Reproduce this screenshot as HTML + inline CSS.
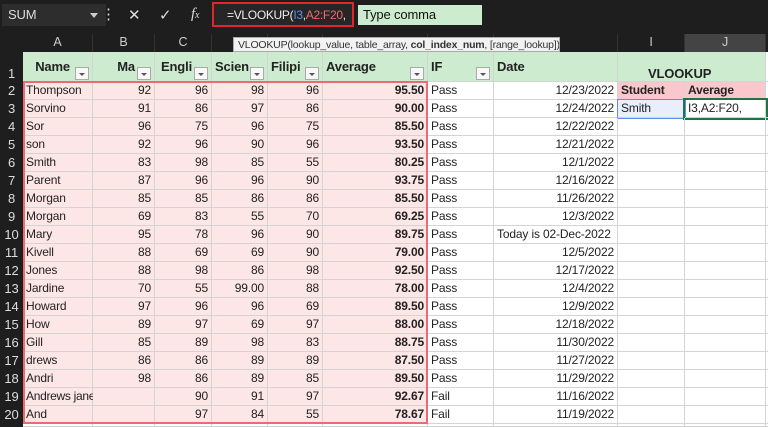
<!DOCTYPE html>
<html><head><meta charset="utf-8">
<style>
*{margin:0;padding:0;box-sizing:border-box}
body{width:768px;height:427px;background:#fff;font-family:"Liberation Sans",Arial,sans-serif;font-size:12px;letter-spacing:-0.15px;color:#222;position:relative;overflow:hidden}
.top{position:absolute;left:0;top:0;width:768px;height:34px;background:#1e1e1e}
.nb{position:absolute;left:2px;top:4px;width:104px;height:22px;background:#2d2d2d;color:#ddd;font-size:13px;padding:3px 6px}
.nb:after{content:"";position:absolute;right:8px;top:9px;border:4px solid transparent;border-top:5px solid #ccc}
.ic{position:absolute;top:6px;color:#ddd;font-size:15px}
.fx{position:absolute;left:212px;top:2px;width:142px;height:25px;border:2px solid #e0262a;background:#262626;color:#eee;font-size:12px;letter-spacing:-0.3px;padding:4px 0 0 13px;white-space:nowrap}
.tc{position:absolute;left:358px;top:5px;width:124px;height:20px;background:#cdeccf;color:#111;font-size:13px;padding:2px 5px}
.tip{position:absolute;left:233px;top:37px;width:327px;height:15px;background:#f2f2f2;border:1px solid #aaa;font-size:10.5px;letter-spacing:-0.2px;color:#333;padding:1px 4px;white-space:nowrap;overflow:hidden}
.row{position:absolute;left:0;width:768px;display:grid;grid-template-columns:23px 70px 62px 57px 56px 55px 105px 66px 124px 67px 81px 2px}
.row>div{border-right:1px solid #d4d4d4;border-bottom:1px solid #d4d4d4;padding:0 3px;white-space:nowrap;overflow:hidden;line-height:17px;position:relative}
.row>div:first-child{background:#1e1e1e;color:#ddd;text-align:center;border:none;padding:0;font-size:13px}
.ch>div{background:#1e1e1e;color:#ccc;text-align:center;border-right:1px solid #333;border-bottom:none;font-size:12.5px}
.p{background:#fde6e6}
.r{text-align:right}
.b{font-weight:bold}
.g{background:#cdeccf}
.h{line-height:30px!important;font-size:13px;padding-top:0!important}
.f{position:absolute;right:3px;bottom:1px;width:14px;height:13px;background:#f8f8f8;border:1px solid #aaa}
.f:after{content:"";position:absolute;left:3px;top:5px;border:3px solid transparent;border-top:3px solid #555}
</style></head><body>
<div class="top">
<div class="nb">SUM</div>
<div class="ic" style="left:101px;top:5px">⋮</div>
<div class="ic" style="left:128px">✕</div>
<div class="ic" style="left:159px">✓</div>
<div class="ic" style="left:191px;font-style:italic;font-family:'Liberation Serif',serif">f<span style="font-size:10px">x</span></div>
<div class="fx">=VLOOKUP(<span style="color:#5b8ff0">I3</span>,<span style="color:#f06a6a">A2:F20</span>,</div>
<div class="tc">Type comma</div>
</div>
<div class="row ch" style="top:34px;height:18px;line-height:18px"><div></div><div>A</div><div>B</div><div>C</div><div>D</div><div>E</div><div>F</div><div>G</div><div>H</div><div>I</div><div style="background:#444">J</div><div></div></div>
<div class="tip">VLOOKUP(lookup_value, table_array, <b>col_index_num</b>, [range_lookup])</div>
<div class="row" style="top:52px;height:30px"><div style="line-height:44px">1</div>
<div class="g b h" style="text-align:right;padding-right:22px">Name<span class="f"></span></div><div class="g b h r" style="padding-right:19px">Ma<span class="f"></span></div><div class="g b h" style="padding-left:6px">Engli<span class="f"></span></div><div class="g b h">Scien<span class="f"></span></div><div class="g b h">Filipi<span class="f"></span></div><div class="g b h">Average<span class="f"></span></div><div class="g b h">IF<span class="f"></span></div><div class="g b h">Date</div><div class="g" style="border-right:none"></div><div class="g b" style="line-height:44px;margin-left:-40px;font-size:13px">VLOOKUP</div><div></div></div>
<div class="row" style="top:82px;height:18px"><div>2</div><div class="p">Thompson</div><div class="p r">92</div><div class="p r">96</div><div class="p r">98</div><div class="p r">96</div><div class="p r b">95.50</div><div>Pass</div><div class="r">12/23/2022</div><div class="b" style="background:#f9c7cc">Student</div><div class="b" style="background:#f9c7cc">Average</div><div></div></div>
<div class="row" style="top:100px;height:18px"><div>3</div><div class="p">Sorvino</div><div class="p r">91</div><div class="p r">86</div><div class="p r">97</div><div class="p r">86</div><div class="p r b">90.00</div><div>Pass</div><div class="r">12/24/2022</div><div style="background:#e8eefa;outline:1px solid #5b8ff0">Smith</div><div style="outline:2px solid #217346">I3,A2:F20,</div><div></div></div>
<div class="row" style="top:118px;height:18px"><div>4</div><div class="p">Sor</div><div class="p r">96</div><div class="p r">75</div><div class="p r">96</div><div class="p r">75</div><div class="p r b">85.50</div><div>Pass</div><div class="r">12/22/2022</div><div></div><div></div><div></div></div>
<div class="row" style="top:136px;height:18px"><div>5</div><div class="p">son</div><div class="p r">92</div><div class="p r">96</div><div class="p r">90</div><div class="p r">96</div><div class="p r b">93.50</div><div>Pass</div><div class="r">12/21/2022</div><div></div><div></div><div></div></div>
<div class="row" style="top:154px;height:18px"><div>6</div><div class="p">Smith</div><div class="p r">83</div><div class="p r">98</div><div class="p r">85</div><div class="p r">55</div><div class="p r b">80.25</div><div>Pass</div><div class="r">12/1/2022</div><div></div><div></div><div></div></div>
<div class="row" style="top:172px;height:18px"><div>7</div><div class="p">Parent</div><div class="p r">87</div><div class="p r">96</div><div class="p r">96</div><div class="p r">90</div><div class="p r b">93.75</div><div>Pass</div><div class="r">12/16/2022</div><div></div><div></div><div></div></div>
<div class="row" style="top:190px;height:18px"><div>8</div><div class="p">Morgan</div><div class="p r">85</div><div class="p r">85</div><div class="p r">86</div><div class="p r">86</div><div class="p r b">85.50</div><div>Pass</div><div class="r">11/26/2022</div><div></div><div></div><div></div></div>
<div class="row" style="top:208px;height:18px"><div>9</div><div class="p">Morgan</div><div class="p r">69</div><div class="p r">83</div><div class="p r">55</div><div class="p r">70</div><div class="p r b">69.25</div><div>Pass</div><div class="r">12/3/2022</div><div></div><div></div><div></div></div>
<div class="row" style="top:226px;height:18px"><div>10</div><div class="p">Mary</div><div class="p r">95</div><div class="p r">78</div><div class="p r">96</div><div class="p r">90</div><div class="p r b">89.75</div><div>Pass</div><div>Today is 02-Dec-2022</div><div></div><div></div><div></div></div>
<div class="row" style="top:244px;height:18px"><div>11</div><div class="p">Kivell</div><div class="p r">88</div><div class="p r">69</div><div class="p r">69</div><div class="p r">90</div><div class="p r b">79.00</div><div>Pass</div><div class="r">12/5/2022</div><div></div><div></div><div></div></div>
<div class="row" style="top:262px;height:18px"><div>12</div><div class="p">Jones</div><div class="p r">88</div><div class="p r">98</div><div class="p r">86</div><div class="p r">98</div><div class="p r b">92.50</div><div>Pass</div><div class="r">12/17/2022</div><div></div><div></div><div></div></div>
<div class="row" style="top:280px;height:18px"><div>13</div><div class="p">Jardine</div><div class="p r">70</div><div class="p r">55</div><div class="p r">99.00</div><div class="p r">88</div><div class="p r b">78.00</div><div>Pass</div><div class="r">12/4/2022</div><div></div><div></div><div></div></div>
<div class="row" style="top:298px;height:18px"><div>14</div><div class="p">Howard</div><div class="p r">97</div><div class="p r">96</div><div class="p r">96</div><div class="p r">69</div><div class="p r b">89.50</div><div>Pass</div><div class="r">12/9/2022</div><div></div><div></div><div></div></div>
<div class="row" style="top:316px;height:18px"><div>15</div><div class="p">How</div><div class="p r">89</div><div class="p r">97</div><div class="p r">69</div><div class="p r">97</div><div class="p r b">88.00</div><div>Pass</div><div class="r">12/18/2022</div><div></div><div></div><div></div></div>
<div class="row" style="top:334px;height:18px"><div>16</div><div class="p">Gill</div><div class="p r">85</div><div class="p r">89</div><div class="p r">98</div><div class="p r">83</div><div class="p r b">88.75</div><div>Pass</div><div class="r">11/30/2022</div><div></div><div></div><div></div></div>
<div class="row" style="top:352px;height:18px"><div>17</div><div class="p">drews</div><div class="p r">86</div><div class="p r">86</div><div class="p r">89</div><div class="p r">89</div><div class="p r b">87.50</div><div>Pass</div><div class="r">11/27/2022</div><div></div><div></div><div></div></div>
<div class="row" style="top:370px;height:18px"><div>18</div><div class="p">Andri</div><div class="p r">98</div><div class="p r">86</div><div class="p r">89</div><div class="p r">85</div><div class="p r b">89.50</div><div>Pass</div><div class="r">11/29/2022</div><div></div><div></div><div></div></div>
<div class="row" style="top:388px;height:18px"><div>19</div><div class="p" style="overflow:visible;letter-spacing:-0.3px">Andrews jane</div><div class="p r"></div><div class="p r">90</div><div class="p r">91</div><div class="p r">97</div><div class="p r b">92.67</div><div>Fail</div><div class="r">11/16/2022</div><div></div><div></div><div></div></div>
<div class="row" style="top:406px;height:18px"><div>20</div><div class="p">And</div><div class="p r"></div><div class="p r">97</div><div class="p r">84</div><div class="p r">55</div><div class="p r b">78.67</div><div>Fail</div><div class="r">11/19/2022</div><div></div><div></div><div></div></div>
<div class="row" style="top:424px;height:3px"><div></div><div></div><div></div><div></div><div></div><div></div><div></div><div></div><div></div><div></div><div></div><div></div></div>
<div style="position:absolute;left:23px;top:81px;width:405px;height:343px;border:2px solid #ea6b73"></div>
</body></html>
